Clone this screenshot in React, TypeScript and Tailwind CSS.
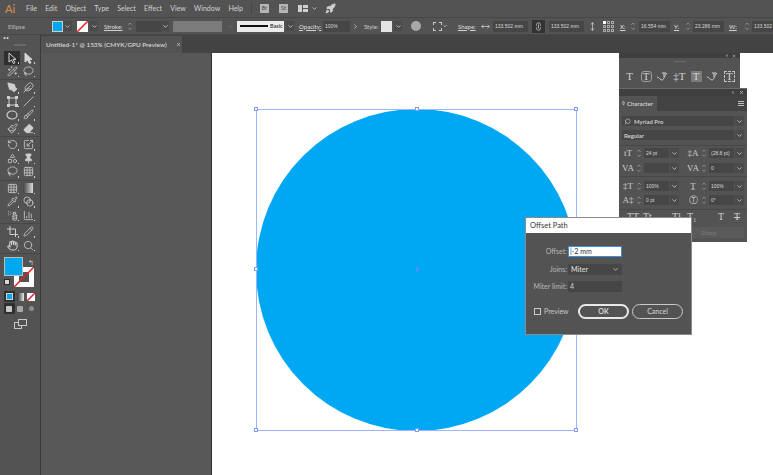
import React from "react";
import {
  BarChart3,
  Blend,
  Brush,
  ChevronDown,
  ChevronRight,
  ChevronUp,
  Eraser,
  Grid3x3,
  Hand,
  Lasso,
  Link2,
  MoveHorizontal,
  MoveVertical,
  PenTool,
  Pencil,
  Pin,
  Pipette,
  RotateCcw,
  Rocket,
  Scaling,
  Search,
  Slash,
  Wand2,
  X,
  Feather,
  Shapes,
  Paintbrush,
  SprayCan,
} from "lucide-react";

const SPIN = () => (
  <div className="flex flex-col items-center justify-center w-[8px] h-[10px] shrink-0 text-[#d0d0d0]">
    <ChevronUp size={6} strokeWidth={2} className="-mb-[1px]" />
    <ChevronDown size={6} strokeWidth={2} />
  </div>
);

const Chev = ({ w = 9 }: { w?: number }) => (
  <div
    className="flex items-center justify-center h-[10px] shrink-0 bg-[#4a4a4a] text-[#d8d8d8]"
    style={{ width: w }}
  >
    <ChevronDown size={7} strokeWidth={2.5} />
  </div>
);

function Field({ w, text, ml = 0 }: { w: number; text?: string; ml?: number }) {
  return (
    <div
      className="h-[11px] bg-[#464646] font-['Liberation_Sans',sans-serif] text-[5px] leading-[11px] text-[#d6d6d6] px-[2px] shrink-0 overflow-hidden whitespace-nowrap"
      style={{ width: w, marginLeft: ml }}
    >
      {text}
    </div>
  );
}

function Arrow({ filled }: { filled?: boolean }) {
  return (
    <svg width="11" height="12" viewBox="0 0 11 12">
      <path
        d="M2 1v9l2.500-2 2 3.500 1.500-.8-2-3.300h3z"
        fill={filled ? "#d6d6d6" : "none"}
        stroke="#d6d6d6"
        strokeWidth="1"
      />
    </svg>
  );
}

const iconProps = { size: 11, color: "#cfcfcf", strokeWidth: 1.7 };

function Tool({ children, active }: { children: React.ReactNode; active?: boolean }) {
  return (
    <div className={`relative flex items-center justify-center w-[16px] h-[13.5px] ${active ? "bg-[#2f2f2f]" : ""}`}>
      {children}
      <span className="absolute right-[1px] bottom-[1px] w-[1.500px] h-[1.500px] bg-[#cfcfcf]" />
    </div>
  );
}

function ToolGroup({ children }: { children: React.ReactNode }) {
  return (
    <div className="grid grid-cols-[16px_16px] justify-center border-b border-[#474747] py-[1px]">
      {children}
    </div>
  );
}

function Toolbar() {
  return (
    <div className="w-[41px] h-full shrink-0 bg-[#535353] border-r border-[#3a3a3a] flex flex-col">
      <div className="h-[7px] text-[5px] leading-[6px] text-[#cfcfcf] pl-[3px]">••</div>
      <div className="h-[8px] flex justify-center">
        <div className="w-[12px] h-[2px] mt-[2px] bg-[#6a6a6a]" />
      </div>
      <ToolGroup>
        <Tool active><Arrow /></Tool>
        <Tool><Arrow filled /></Tool>
        <Tool><Wand2 {...iconProps} /></Tool>
        <Tool><Lasso {...iconProps} /></Tool>
      </ToolGroup>
      <ToolGroup>
        <Tool><PenTool {...iconProps} fill="#cfcfcf" /></Tool>
        <Tool><Feather {...iconProps} /></Tool>
        <Tool>
          <svg width="11" height="11" viewBox="0 0 11 11" fill="none" stroke="#cfcfcf">
            <rect x="2" y="2" width="7" height="7" />
            <rect x="0.500" y="0.500" width="2" height="2" fill="#cfcfcf" />
            <rect x="8.500" y="0.500" width="2" height="2" fill="#cfcfcf" />
            <rect x="0.500" y="8.500" width="2" height="2" fill="#cfcfcf" />
            <rect x="8.500" y="8.500" width="2" height="2" fill="#cfcfcf" />
          </svg>
        </Tool>
        <Tool><Slash {...iconProps} /></Tool>
        <Tool>
          <svg width="12" height="10" viewBox="0 0 12 10">
            <ellipse cx="6" cy="5" rx="5" ry="4" fill="none" stroke="#cfcfcf" strokeWidth="1.200" />
          </svg>
        </Tool>
        <Tool><Brush {...iconProps} /></Tool>
        <Tool><Paintbrush {...iconProps} /></Tool>
        <Tool><Eraser {...iconProps} fill="#cfcfcf" /></Tool>
      </ToolGroup>
      <ToolGroup>
        <Tool><RotateCcw {...iconProps} /></Tool>
        <Tool><Scaling {...iconProps} /></Tool>
        <Tool><Shapes {...iconProps} /></Tool>
        <Tool><Pin {...iconProps} fill="#cfcfcf" /></Tool>
        <Tool><Lasso {...iconProps} /></Tool>
        <Tool><Grid3x3 {...iconProps} /></Tool>
      </ToolGroup>
      <ToolGroup>
        <Tool><Grid3x3 {...iconProps} /></Tool>
        <Tool><div className="w-[10px] h-[10px] bg-gradient-to-r from-[#444] to-[#ddd]" /></Tool>
        <Tool><Pipette {...iconProps} /></Tool>
        <Tool><Blend {...iconProps} /></Tool>
        <Tool><SprayCan {...iconProps} /></Tool>
        <Tool><BarChart3 {...iconProps} /></Tool>
      </ToolGroup>
      <ToolGroup>
        <Tool>
          <svg width="11" height="11" viewBox="0 0 11 11" fill="none" stroke="#cfcfcf">
            <path d="M3 0v8.500h8M0 3h8.500v8" />
          </svg>
        </Tool>
        <Tool><Pencil {...iconProps} /></Tool>
        <Tool><Hand size={11} color="#d8d8d8" strokeWidth={2.2} /></Tool>
        <Tool><Search {...iconProps} /></Tool>
      </ToolGroup>
      <div className="relative w-[36px] h-[34px] mt-[3px] ml-[2px] shrink-0">
        <div className="absolute left-[12px] top-[10px] w-[20px] h-[20px] bg-white flex items-center justify-center overflow-hidden">
          <div className="w-[10px] h-[10px] bg-[#535353]" />
          <svg className="absolute inset-0" width="20" height="20" viewBox="0 0 20 20">
            <line x1="0" y1="20" x2="20" y2="0" stroke="#e81c24" strokeWidth="1.500" />
          </svg>
        </div>
        <div className="absolute left-[2px] top-0 w-[19px] h-[19px] bg-[#00a8f0] border border-[#bcbcbc]" />
        <div className="absolute left-[2px] top-[22px] w-[6px] h-[6px] bg-[#d8d8d8] border border-[#2a2a2a]" />
        <span className="absolute left-[26px] top-[1px] text-[7px] leading-[8px] text-[#cfcfcf]">↰</span>
      </div>
      <div className="grid grid-cols-[11px_11px_11px] justify-center mt-0">
        <div className="w-[11px] h-[11px] flex items-center justify-center bg-[#2f2f2f]">
          <div className="w-[7px] h-[7px] bg-[#00a8f0] border border-[#d0d0d0]" />
        </div>
        <div className="w-[11px] h-[11px] flex items-center justify-center">
          <div className="w-[7px] h-[8px] bg-gradient-to-r from-[#333] to-[#eee]" />
        </div>
        <div className="w-[11px] h-[11px] flex items-center justify-center">
          <svg width="8" height="8" viewBox="0 0 8 8">
            <rect width="8" height="8" fill="#fff" />
            <line x1="0" y1="8" x2="8" y2="0" stroke="#e81c24" strokeWidth="1.500" />
          </svg>
        </div>
      </div>
      <div className="grid grid-cols-[11px_11px_11px] justify-center mt-[1px]">
        <div className="w-[11px] h-[11px] rounded-[1px] bg-[#2f2f2f] flex items-center justify-center">
          <div className="w-[6px] h-[6px] rounded-[1px] bg-[#c8c8c8]" />
        </div>
        <div className="w-[11px] h-[11px] flex items-center justify-center">
          <div className="w-[6px] h-[6px] rounded-[1px] bg-[#a8a8a8]" />
        </div>
        <div className="w-[11px] h-[11px] flex items-center justify-center">
          <div className="w-[5px] h-[5px] rounded-full bg-[#8c8c8c]" />
        </div>
      </div>
      <div className="flex justify-center mt-[5px]">
        <div className="relative w-[13px] h-[10px]">
          <div className="absolute left-0 top-[3px] w-[8px] h-[7px] border border-[#c8c8c8]" />
          <div className="absolute right-0 top-0 w-[9px] h-[7px] border border-[#c8c8c8] bg-[#535353]" />
        </div>
      </div>
    </div>
  );
}

function MenuBar() {
  return (
    <div className="h-[17px] shrink-0 bg-[#535353] flex items-center text-[7px] text-[#d2d2d2] *:shrink-0">
      <span className="ml-[5px] w-[21px] text-[11px] leading-none font-semibold text-[#c98a55]">Ai</span>
      <div className="flex justify-between w-[217px]">
        {["File", "Edit", "Object", "Type", "Select", "Effect", "View", "Window", "Help"].map((m) => (
          <span key={m}>{m}</span>
        ))}
      </div>
      <div className="ml-[8px] w-[1px] h-[10px] bg-[#444]" />
      <div className="ml-[8px] w-[9px] h-[9px] bg-[#b5b5b5] text-[5.500px] leading-[9px] text-center text-[#444]">Br</div>
      <div className="ml-[10px] w-[9px] h-[9px] bg-[#b5b5b5] text-[5.500px] leading-[9px] text-center text-[#444]">St</div>
      <div className="ml-[10px] w-[10px] h-[7px] flex gap-[1px]">
        <div className="w-[4px] h-[7px] bg-[#d0d0d0]" />
        <div className="w-[5px] h-[7px] border-t-[3px] border-b-[3px] border-[#d0d0d0]" />
      </div>
      <ChevronDown className="ml-[3px]" size={7} strokeWidth={2.500} />
      <Rocket className="ml-[7px]" size={11} color="#cfcfcf" fill="#cfcfcf" />
    </div>
  );
}

function ControlBar() {
  return (
    <div className="h-[17px] shrink-0 bg-[#535353] border-t border-[#474747] flex items-center text-[6px] text-[#d0d0d0] whitespace-nowrap overflow-hidden *:shrink-0">
      <span className="ml-[8px] w-[44px] text-[#bdbdbd]">Ellipse</span>
      <div className="w-[11px] h-[11px] bg-[#00a8f0] border border-[#cfcfcf]" />
      <Chev w={9} />
      <svg className="ml-[5px]" width="11" height="11" viewBox="0 0 11 11">
        <rect width="11" height="11" fill="#fff" />
        <line x1="0" y1="11" x2="11" y2="0" stroke="#e81c24" strokeWidth="1.500" />
      </svg>
      <div className="ml-[2px]"><Chev w={8} /></div>
      <span className="ml-[6px] w-[22px] underline font-semibold">Stroke:</span>
      <SPIN />
      <Field w={25} ml={2} />
      <Chev w={8} />
      <div className="ml-[4px] w-[49px] h-[11px] bg-[#7b7b7b]" />
      <div className="ml-[4px] w-[9px] flex justify-center text-[#777]">
        <ChevronDown size={7} strokeWidth={2.500} />
      </div>
      <div className="ml-[2px] w-[47px] h-[11px] bg-[#ececec] flex items-center text-[#333] text-[5.500px]">
        <div className="ml-[3px] w-[28px] h-[1.500px] bg-[#111]" />
        <span className="ml-[2px] font-semibold">Basic</span>
      </div>
      <div className="ml-[2px]"><Chev w={8} /></div>
      <span className="ml-[5px] w-[24px] underline font-semibold">Opacity:</span>
      <Field w={27} text="100%" />
      <ChevronRight className="ml-[2px]" size={7} strokeWidth={2.500} />
      <span className="ml-[5px] w-[17px] text-[#cfcfcf]">Style:</span>
      <div className="w-[11px] h-[11px] bg-[#e4e4e4]" />
      <div className="ml-[2px]"><Chev w={8} /></div>
      <div className="ml-[9px] w-[10px] h-[10px] rounded-full bg-[#a8a8a8]" />
      <div className="ml-[12px] w-[9px] h-[9px] border border-dashed border-[#c8c8c8]" />
      <ChevronDown size={6} strokeWidth={2.500} />
      <span className="ml-[10px] w-[23px] underline font-semibold">Shape:</span>
      <MoveHorizontal size={9} color="#d0d0d0" />
      <Field w={35} text="133.502 mm" ml={3} />
      <div className="ml-[4px] w-[13px] h-[13px] bg-[#333] flex items-center justify-center">
        <Link2 className="rotate-90" size={9} color="#d0d0d0" />
      </div>
      <Field w={35} text="133.502 mm" ml={4} />
      <MoveVertical className="ml-[4px]" size={9} color="#d0d0d0" />
      <div className="ml-[6px] grid grid-cols-3 gap-[1px]">
        {[0, 1, 2, 3, 4, 5, 6, 7, 8].map((i) => (
          <span key={i} className={`w-[3px] h-[3px] ${i === 0 ? "bg-white" : "border border-[#a8a8a8]"}`} />
        ))}
      </div>
      <span className="ml-[6px] w-[7px] underline font-semibold">X:</span>
      <span className="ml-[2px]"><SPIN /></span>
      <Field w={31} text="16.554 mm" ml={2} />
      <span className="ml-[4px] w-[7px] underline font-semibold">Y:</span>
      <span className="ml-[3px]"><SPIN /></span>
      <Field w={31} text="23.286 mm" ml={1} />
      <span className="ml-[5px] w-[9px] underline font-semibold">W:</span>
      <span className="ml-[5px]"><SPIN /></span>
      <Field w={36} text="133.502 mm" ml={1} />
    </div>
  );
}

function Handle({ pos }: { pos: string }) {
  return <span className={`absolute w-[4px] h-[4px] bg-white border border-[#7f9bff] ${pos}`} />;
}

function Canvas() {
  return (
    <div className="relative flex-1 bg-white overflow-hidden border-l border-[#2e2e2e]">
      <div className="absolute left-[44px] top-[56px] w-[321px] h-[322px] rounded-full bg-[#00a8f3]" />
      <div className="absolute left-[44px] top-[56px] w-[321px] h-[322px] border border-[#9db4ff]" />
      <Handle pos="left-[42px] top-[54px]" />
      <Handle pos="left-[203px] top-[54px]" />
      <Handle pos="left-[362px] top-[54px]" />
      <Handle pos="left-[42px] top-[214px]" />
      <Handle pos="left-[42px] top-[375px]" />
      <Handle pos="left-[203px] top-[375px]" />
      <Handle pos="left-[362px] top-[375px]" />
      <span className="absolute left-[204px] top-[215px] w-[3px] h-[3px] bg-[#5b8cff]" />
    </div>
  );
}

function GlyphsPanel() {
  const icon = "w-[11px] h-[11px] flex items-center justify-center shrink-0 text-[11px] leading-none text-[#d2d2d2] font-['Liberation_Serif',serif]";
  const path = (
    <svg width="11" height="11" viewBox="0 0 11 11" fill="none" stroke="#d2d2d2">
      <path d="M0 6c2 0 3 3 5 3s2-4 5-7" />
      <path d="M5 2h4M7 2v4" />
    </svg>
  );
  return (
    <div className="absolute left-[619px] top-[53px] w-[121px] h-[35px] bg-[#535353]">
      <div className="h-[5px] bg-[#3f3f3f] flex justify-end items-center gap-[4px] pr-[4px] text-[#cfcfcf]">
        <span className="text-[5px] leading-none">«</span>
        <X size={4} strokeWidth={3} />
      </div>
      <div className="w-[12px] h-[1px] bg-[#6b6b6b] mx-auto mt-[3px]" />
      <div className="flex justify-between px-[5px] mt-[9px]">
        <span className={icon}>T</span>
        <span className={`${icon} border-[1.500px] rounded-[3px] border-[#9c9c9c] text-[8px]`}>T</span>
        {path}
        <span className={`${icon} text-[10px]`}>‡T</span>
        <span className={`${icon} bg-[#7c7c7c] text-[8px]`}>T</span>
        {path}
        <span className={`${icon} border border-dashed border-[#c0c0c0] text-[8px]`}>T</span>
      </div>
    </div>
  );
}

function CharRow({ icon, value }: { icon: string; value?: string }) {
  return (
    <div className="flex items-center">
      <span className="w-[14px] font-['Liberation_Serif','DejaVu_Sans',serif] text-[9px] leading-none text-[#cfcfcf] text-center shrink-0 whitespace-nowrap">
        {icon}
      </span>
      <SPIN />
      <div className="ml-[1px] w-[25px] h-[10px] bg-[#464646] font-['Liberation_Sans',sans-serif] text-[5px] leading-[10px] px-[2px] text-[#d6d6d6] overflow-hidden whitespace-nowrap">
        {value}
      </div>
      <div className="ml-[1px]"><Chev w={9} /></div>
    </div>
  );
}

function CharacterPanel() {
  return (
    <div className="absolute left-[619px] top-[88px] w-[128px] h-[154px] bg-[#535353] border-t border-[#6a6a6a] text-[6px] text-[#d6d6d6]">
      <div className="h-[7px] bg-[#3f3f3f] flex justify-end items-center gap-[5px] pr-[3px] text-[#cfcfcf]">
        <span className="text-[5px] leading-none">«</span>
        <X size={5} strokeWidth={3} />
      </div>
      <div className="h-[15px] bg-[#434343] flex items-center justify-between pr-[3px]">
        <div className="w-[38px] h-full bg-[#535353] flex items-center pl-[3px] font-semibold gap-[2px]">
          <span className="text-[5px]">◊</span>
          <span>Character</span>
        </div>
        <div className="flex flex-col gap-[1px]">
          <span className="w-[6px] h-[1px] bg-[#bbb]" />
          <span className="w-[6px] h-[1px] bg-[#bbb]" />
          <span className="w-[6px] h-[1px] bg-[#bbb]" />
        </div>
      </div>
      <div className="flex gap-[1px] px-[3px] mt-[5px]">
        <div className="flex-1 h-[10px] bg-[#464646] flex items-center px-[2px] gap-[3px]">
          <Search size={7} className="-scale-x-100" />
          <span className="font-semibold">Myriad Pro</span>
        </div>
        <Chev w={9} />
      </div>
      <div className="flex gap-[1px] px-[3px] mt-[4px]">
        <div className="flex-1 h-[10px] bg-[#464646] flex items-center px-[2px] font-semibold">Regular</div>
        <Chev w={9} />
      </div>
      <div className="h-[1px] bg-[#474747] mt-[5px]" />
      <div className="grid grid-cols-[58px_58px] gap-x-[7px] pl-[2px] mt-[2px] gap-y-[5px]">
        <CharRow icon="tT" value="24 pt" />
        <CharRow icon="‡A" value="(28.8 pt)" />
        <CharRow icon="VA" />
        <CharRow icon="VA" value="0" />
      </div>
      <div className="h-[1px] bg-[#474747] mt-[3px]" />
      <div className="grid grid-cols-[58px_58px] gap-x-[7px] pl-[2px] mt-[4px] gap-y-[4px]">
        <CharRow icon="‡T" value="100%" />
        <CharRow icon="T̲" value="100%" />
        <CharRow icon="A‡" value="0 pt" />
        <CharRow icon="Ⓣ" value="0°" />
      </div>
      <div className="h-[1px] bg-[#474747] mt-[4px]" />
      <div className="relative h-[12px] mt-[1px] font-['Liberation_Serif',serif] text-[10px] leading-[12px] text-[#cfcfcf]">
        <span className="absolute left-[8px]">TT</span>
        <span className="absolute left-[24px]">Tt</span>
        <span className="absolute left-[53px]">T¹</span>
        <span className="absolute left-[68px]">T₁</span>
        <span className="absolute left-[99px]">T</span>
        <span className="absolute left-[115px] line-through">T</span>
      </div>
      <div className="flex justify-end items-center gap-[2px] pr-[3px] mt-[4px]">
        <span className="text-[#bdbdbd]">aa</span>
        <div className="w-[52px] h-[11px] bg-[#5a5a5a] text-[#7d7d7d] leading-[11px] pl-[9px]">Sharp</div>
      </div>
    </div>
  );
}

function OffsetDialog() {
  return (
    <div className="absolute left-[525px] top-[217px] w-[167px] h-[118px] bg-[#535353] border border-[#8a8a8a] text-[7px] text-[#d4d4d4]">
      <div className="h-[15px] bg-white text-[#333] text-[7.500px] leading-[15px] pl-[4px]">Offset Path</div>
      <div className="grid grid-cols-[41px_54px] gap-x-[1px] gap-y-[6.500px] items-center mt-[13px]">
        <span className="text-right text-[#b8b8b8]">Offset:</span>
        <div className="h-[11px] bg-white border border-[#3f8fd8] text-[#333] leading-[9px] pl-[1px]">|-2 mm</div>
        <span className="text-right text-[#b8b8b8]">Joins:</span>
        <div className="h-[11px] bg-[#464646] flex items-center justify-between px-[3px]">
          <span className="font-semibold">Miter</span>
          <ChevronDown size={7} strokeWidth={2.500} />
        </div>
        <span className="text-right text-[#b8b8b8] whitespace-nowrap">Miter limit:</span>
        <div className="h-[11px] bg-[#464646] leading-[11px] px-[2px]">4</div>
      </div>
      <div className="flex items-center mt-[12px] pl-[8px]">
        <div className="w-[7px] h-[7px] border border-[#c8c8c8]" />
        <span className="ml-[3px] w-[34px] text-[#c8c8c8]">Preview</span>
        <button className="w-[51px] h-[15px] rounded-full border-2 border-[#e8e8e8] leading-[11px] font-semibold text-[#e4e4e4]">OK</button>
        <button className="ml-[3px] w-[51px] h-[15px] rounded-full border border-[#c8c8c8] leading-[13px] text-[#d8d8d8]">Cancel</button>
      </div>
    </div>
  );
}

export default function App() {
  return (
    <div className="relative w-[773px] h-[475px] overflow-hidden flex flex-col bg-[#535353] font-['Lato',sans-serif]">
      <MenuBar />
      <ControlBar />
      <div className="flex flex-1 min-h-0 border-t border-[#474747]">
        <Toolbar />
        <div className="flex flex-col flex-1 min-w-0">
          <div className="h-[18px] shrink-0 bg-[#434343] flex">
            <div className="w-[141px] h-[17px] mt-[1px] bg-[#535353] flex items-center text-[6.400px] font-semibold text-[#d8d8d8] pl-[5px] whitespace-nowrap">
              <span className="w-[130px]">Untitled-1* @ 153% (CMYK/GPU Preview)</span>
              <X size={5} strokeWidth={3} />
            </div>
          </div>
          <div className="flex flex-1 min-h-0">
            <div className="w-[170px] shrink-0 bg-[#585858]" />
            <Canvas />
          </div>
        </div>
      </div>
      <GlyphsPanel />
      <CharacterPanel />
      <OffsetDialog />
    </div>
  );
}
